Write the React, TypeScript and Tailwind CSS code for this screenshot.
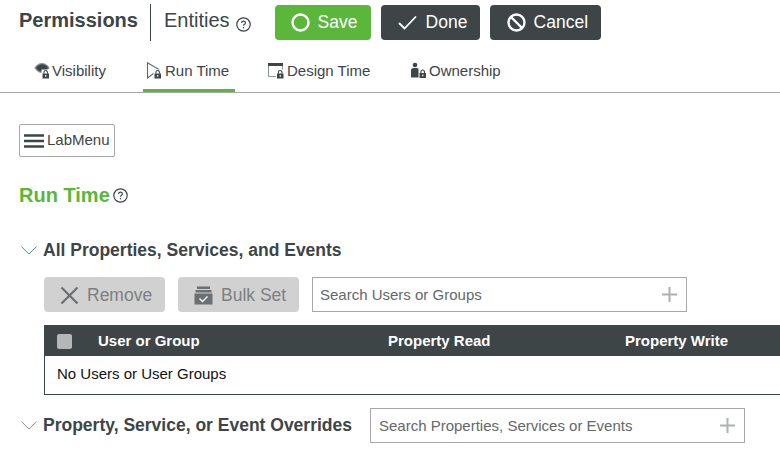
import React from "react";

const HelpIcon = () => (
  <svg width="15" height="15" viewBox="0 0 15 15" fill="none" className="text-[#3d4547]">
    <circle cx="7.5" cy="7.5" r="6.7" stroke="currentColor" strokeWidth="1.2" />
    <path d="M5.6 6c0-1.100.8-1.800 1.900-1.800s1.900.7 1.900 1.700c0 1.400-1.900 1.400-1.900 2.800" stroke="currentColor" strokeWidth="1.200" />
    <rect x="6.900" y="10" width="1.200" height="1.300" fill="currentColor" />
  </svg>
);

const Lock = ({ x, y }: { x: number; y: number }) => (
  <g transform={`translate(${x} ${y})`}>
    <rect x="-0.500" y="-1" width="8.500" height="9.500" fill="#fff" />
    <path d="M1.900 3V1.800a1.800 1.800 0 0 1 3.600 0V3" stroke="#3d4547" strokeWidth="1.100" fill="none" />
    <rect x="0.500" y="3" width="6.500" height="5" fill="#3d4547" />
    <rect x="3.200" y="4.500" width="1.100" height="1.800" fill="#fff" />
  </g>
);

const VisibilityIcon = () => (
  <svg width="17" height="17" viewBox="0 0 17 17">
    <path d="M.3 6C2.300 2.500 5 1 8 1s5.800 1.500 7.700 5c-1.900 3-4.700 5-7.700 5S2.300 9 .3 6z" fill="#8d9294" />
    <path d="M2 6c1.500-2.700 3.800-3.800 6.300-3.800S12.500 3.400 14 6c-1.300 2.200-3.500 3.800-6 3.800S3.500 8.200 2 6z" fill="#3d4547" />
    <Lock x={8} y={8.500} />
  </svg>
);

const RunTimeIcon = () => (
  <svg width="17" height="17" viewBox="0 0 17 17">
    <path d="M1.500 .8v15.200L13 7.500z" stroke="#5d6567" strokeWidth="1.100" fill="none" />
    <Lock x={8} y={8.500} />
  </svg>
);

const DesignTimeIcon = () => (
  <svg width="17" height="17" viewBox="0 0 17 17">
    <rect x="0" y="1" width="15" height="3" fill="#3d4547" />
    <path d="M.5 4v10.500h8M14.500 4v5" stroke="#8d9294" strokeWidth="1" fill="none" />
    <Lock x={8.500} y={8.500} />
  </svg>
);

const OwnershipIcon = () => (
  <svg width="17" height="17" viewBox="0 0 17 17">
    <circle cx="5" cy="3" r="2.300" fill="#3d4547" />
    <path d="M1 15.500V8.500C1 6.800 2 6 3.500 6h3C8 6 9 6.800 9 8v7.500z" fill="#3d4547" />
    <Lock x={9} y={8} />
  </svg>
);

const Chevron = ({ color }: { color: string }) => (
  <svg width="16" height="9" viewBox="0 0 16 9" fill="none">
    <path d="M.5.700L8 8l7.500-7.300" stroke={color} strokeWidth="1" />
  </svg>
);

const Plus = () => (
  <svg width="15" height="15" viewBox="0 0 15 15">
    <path d="M7.500 0v15M0 7.500h15" stroke="#aeb1b2" strokeWidth="2" />
  </svg>
);

const tabs = [
  { label: "Visibility", icon: <VisibilityIcon />, width: "w-[84px]", gap: "gap-[1px] pl-[3px]", active: false },
  { label: "Run Time", icon: <RunTimeIcon />, width: "w-[92px]", gap: "gap-[2px] pl-[3px]", active: true },
  { label: "Design Time", icon: <DesignTimeIcon />, width: "w-[115px]", gap: "gap-[2px] pl-[5px]", active: false },
  { label: "Ownership", icon: <OwnershipIcon />, width: "w-[100px]", gap: "gap-[2px] pl-[4px]", active: false },
];

const SearchBox = ({ text, pad }: { text: string; pad: string }) => (
  <div className={`${pad} flex h-[35px] w-[375px] items-center justify-between border border-[#a8a8a8] bg-white pr-[9px]`}>
    <span className="pt-px text-[15px] text-[#63686a]">{text}</span>
    <Plus />
  </div>
);

export default function App() {
  return (
    <div className="h-[462px] w-[780px] overflow-hidden bg-white font-['Liberation_Sans',Arial,sans-serif] text-[#3d4547]">
      {/* title bar */}
      <div className="flex h-[45px] items-start pl-[19px] pt-[4px]">
        <div className="flex h-[37px] items-center pb-[5px] text-[20px] font-bold">Permissions</div>
        <div className="ml-[12px] h-[37px] w-px bg-[#3d4547]" />
        <div className="ml-[13px] flex h-[37px] items-center pb-[5px] text-[20px]">Entities</div>
        <div className="ml-[6px] mt-[13px]">
          <HelpIcon />
        </div>
        <div className="ml-[24px] mt-px flex gap-[10px] text-[17.5px] text-white">
          <button className="flex h-[35px] w-[96px] items-center gap-[8px] rounded-[4px] bg-[#5ab73a] pl-[16px]">
            <svg width="19" height="19" viewBox="0 0 19 19" fill="none">
              <circle cx="9.500" cy="9.500" r="8" stroke="#fff" strokeWidth="2.400" />
            </svg>
            Save
          </button>
          <button className="flex h-[35px] w-[99px] items-center gap-[9px] rounded-[4px] bg-[#3d4547] pl-[17px]">
            <svg width="19" height="15" viewBox="0 0 19 15" fill="none">
              <path d="M1 8l5.500 5.500L18 1.500" stroke="#fff" strokeWidth="1.800" />
            </svg>
            Done
          </button>
          <button className="flex h-[35px] w-[111px] items-center gap-[8px] rounded-[4px] bg-[#3d4547] pl-[17px]">
            <svg width="19" height="19" viewBox="0 0 19 19" fill="none">
              <circle cx="9.500" cy="9.500" r="8" stroke="#fff" strokeWidth="2.400" />
              <path d="M4 4l11 11" stroke="#fff" strokeWidth="2.400" />
            </svg>
            Cancel
          </button>
        </div>
      </div>

      {/* tabs */}
      <div className="flex h-[48px] items-stretch gap-[28px] border-b border-[#a8a8a8] pl-[31px]">
        {tabs.map((t) => (
          <div
            key={t.label}
            className={`${t.width} ${t.gap} flex h-[47px] items-center border-b-[3px] pt-[8px] text-[15px] ${
              t.active ? "border-[#5ab73a]" : "border-transparent"
            }`}
          >
            <span className="mb-[2px]">{t.icon}</span>
            {t.label}
          </div>
        ))}
      </div>

      <div className="pl-[19px]">
        <button className="mt-[31px] flex h-[33px] w-[96px] items-center gap-[3px] rounded-[2px] border border-[#a8a8a8] pl-[4px] text-[15px]">
          <svg width="20" height="14" viewBox="0 0 20 14">
            <path d="M0 1.500h20M0 7h20M0 12.500h20" stroke="#3d4547" strokeWidth="2.700" />
          </svg>
          LabMenu
        </button>

        <div className="mt-[26px] flex h-[24px] items-center gap-[3px]">
          <span className="text-[20px] font-bold text-[#5ab73a]">Run Time</span>
          <span className="mt-px">
            <HelpIcon />
          </span>
        </div>

        <div className="mt-[31px] flex h-[24px] items-center gap-[6px] pl-[2px]">
          <Chevron color="#5c87a8" />
          <span className="text-[17.5px] font-bold">All Properties, Services, and Events</span>
        </div>

        <div className="ml-[25px] mt-[15px] flex gap-[13px]">
          <button className="flex h-[35px] w-[121px] items-center gap-[8px] rounded-[4px] bg-[#d1d1d1] pl-[16px] pt-[2px] text-[17.5px] text-[#7d8081]">
            <svg width="19" height="19" viewBox="0 0 19 19" fill="none">
              <path d="M1.500 1.500l16 16M17.500 1.500l-16 16" stroke="#6a6f71" strokeWidth="2.200" />
            </svg>
            Remove
          </button>
          <button className="flex h-[35px] w-[121px] items-center gap-[8px] rounded-[4px] bg-[#d1d1d1] pl-[16px] pt-[2px] text-[17.5px] text-[#7d8081]">
            <svg width="19" height="19" viewBox="0 0 19 19">
              <rect x="3" y="0.500" width="13" height="2.500" fill="#6a6f71" />
              <rect x="1.500" y="4" width="16" height="2.500" fill="#6a6f71" />
              <rect x="0.500" y="7.500" width="18" height="11" fill="#6a6f71" />
              <path d="M5.500 12.500l3 3 5-5" stroke="#fff" strokeWidth="1.400" fill="none" />
            </svg>
            Bulk Set
          </button>
          <SearchBox text="Search Users or Groups" pad="pl-[7px]" />
        </div>

        <div className="ml-[25px] mt-[13px] h-[70px] w-[736px] border-b border-l border-[#3d4547]">
          <div className="flex h-[31px] items-center bg-[#3d4547] pt-px text-[15px] font-bold text-white">
            <span className="ml-[12px] h-[15px] w-[15px] rounded-[2px] bg-[#b4b6b7]" />
            <span className="ml-[26px] w-[290px]">User or Group</span>
            <span className="w-[237px]">Property Read</span>
            <span>Property Write</span>
          </div>
          <div className="flex h-[36px] items-center pl-[12px] text-[15px] text-[#111]">No Users or User Groups</div>
        </div>

        <div className="mt-[13px] flex items-center">
          <div className="ml-[2px]">
            <Chevron color="#8d9294" />
          </div>
          <span className="ml-[6px] text-[17.5px] font-bold">Property, Service, or Event Overrides</span>
          <div className="ml-[18px]">
            <SearchBox text="Search Properties, Services or Events" pad="pl-[8px]" />
          </div>
        </div>
      </div>
    </div>
  );
}
